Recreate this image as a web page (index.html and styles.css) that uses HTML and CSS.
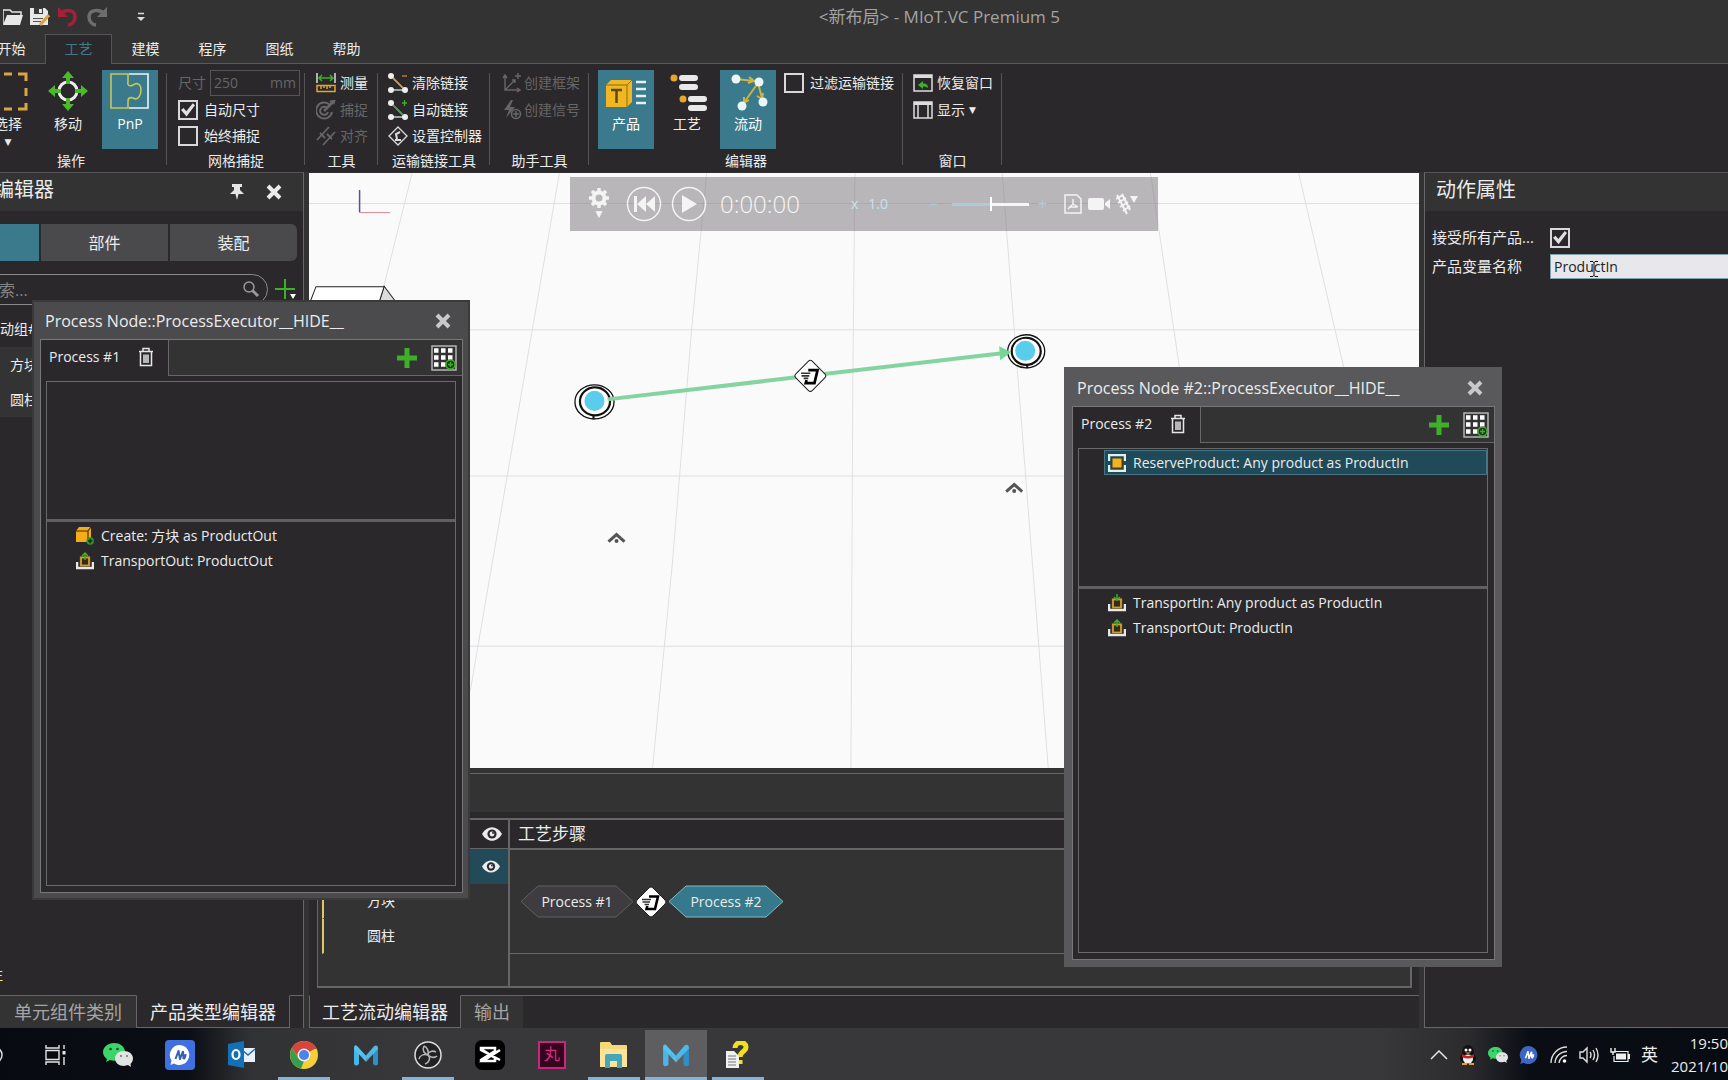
FILE: index.html
```html
<!DOCTYPE html>
<html lang="zh-CN">
<head>
    <meta charset="UTF-8">
    <meta name="viewport" content="width=device-width, initial-scale=1.0">
    <title>MIoT.VC Premium 5</title>
    <link rel="stylesheet" href="styles.css">
</head>
<body>
    <!-- shared icons -->
    <svg class="sprite" aria-hidden="true">
        <symbol id="close" viewBox="0 0 16 16"><path d="M2 2L14 14M14 2L2 14" stroke="currentColor" stroke-width="4"/></symbol>
        <symbol id="trash" viewBox="0 0 16 20"><path d="M1 4.500H15M5 4V1.500H11V4M2.500 5V18.500H13.500V5M6 7.500V16M8 7.500V16M10 7.500V16" fill="none" stroke="#e6e6e6" stroke-width="1.500"/></symbol>
        <symbol id="plus" viewBox="0 0 20 20"><path d="M10 0V20M0 10H20" stroke="#3fae2a" stroke-width="5"/></symbol>
        <symbol id="grid" viewBox="0 0 26 26">
            <rect x="1" y="1" width="24" height="24" fill="none" stroke="#b5b5b5" stroke-width="1.500"/>
            <path d="M3 5.500H7.500M10 5.500H14.500M17 5.500H21.500M3 12.500H7.500M10 12.500H14.500M17 12.500H21.500M3 19.500H7.500M10 19.500H14.500" stroke="#fff" stroke-width="4.500"/>
            <circle cx="19.500" cy="19.500" r="4.500" fill="#253222" stroke="#3fae2a" stroke-width="1.500"/>
            <path d="M19.500 17V22M17 19.500H22" stroke="#3fae2a" stroke-width="1.500"/>
        </symbol>
        <symbol id="transport" viewBox="0 0 18 18">
            <path d="M1 10V16H17V10" fill="none" stroke="#e8e8e8" stroke-width="2.500"/>
            <rect x="3.500" y="4" width="11" height="10.500" fill="#5a4210"/>
            <rect x="5" y="5.500" width="8" height="8" fill="#3a2a10" stroke="#c9a13c" stroke-width="1.800"/>
        </symbol>
        <symbol id="reserve" viewBox="0 0 18 18">
            <path d="M1 7V1H17V7M1 11V17H17V11" fill="none" stroke="#d9f1f7" stroke-width="2.400"/>
            <rect x="3" y="3" width="12" height="12" fill="#493c17"/>
            <rect x="4.500" y="4.500" width="9" height="9" fill="#f0b324"/>
        </symbol>
        <symbol id="cube-add" viewBox="0 0 18 18">
            <path d="M0 4L3 0H15V11L12 15H0Z" fill="#f6ac17"/>
            <path d="M0 4H12L15 0M12 4V15" fill="none" stroke="#453310" stroke-width="1.200"/>
            <circle cx="14.200" cy="14" r="3.800" fill="#2b9430"/>
            <path d="M14.200 11.800V16.200M12 14H16.400" stroke="#0d3311" stroke-width="1.400"/>
        </symbol>
        <symbol id="links" viewBox="0 0 20 20">
            <path d="M3 3L17 17H3" fill="none" stroke="#bcd0cf" stroke-width="1.300"/>
            <circle cx="3" cy="3" r="3" fill="#eee"/><circle cx="3" cy="17" r="3" fill="#eee"/><circle cx="17" cy="17" r="3" fill="#eee"/>
        </symbol>
        <symbol id="eye" viewBox="0 0 20 14">
            <path d="M0 7C5-2 15-2 20 7C15 16 5 16 0 7Z" fill="#ececec"/>
            <circle cx="10" cy="7" r="4.600" fill="#2a282b"/><circle cx="10" cy="7" r="2.400" fill="#ececec"/>
            <circle cx="11" cy="6" r="1" fill="#2a282b"/>
        </symbol>
        <symbol id="flow-mark" viewBox="0 0 32 32">
            <path d="M16 1Q17 1 18 2L30 14Q32 16 30 18L18 30Q16 32 14 30L2 18Q0 16 2 14L14 2Q15 1 16 1Z" fill="#fff" stroke="#222" stroke-width="1"/>
            <path d="M14 10.500H23L20 23H11.500L12.300 20" fill="none" stroke="#000" stroke-width="2.600"/>
            <path d="M7 13.500H16M7.500 16H15M9.500 18.500H14" stroke="#333" stroke-width="1.600"/>
        </symbol>
        <symbol id="wechat" viewBox="0 0 30 26">
            <path d="M11 1C5 1 0 5 0 10C0 13 1.500 15 4 17L3 20L7 18C10 19 13 19 16 17C20 15 22 13 22 9C21 4 17 1 11 1Z" fill="#3bd56a"/>
            <circle cx="7.500" cy="7" r="1.300" fill="#17512b"/><circle cx="14.500" cy="7" r="1.300" fill="#17512b"/>
            <path d="M21 9C16 9 12 12 12 16.500C12 21 16 24 21 24L25 23L28 25L27.500 22C29 20.500 30 18.500 30 16.500C30 12 26 9 21 9Z" fill="#e3e3e3"/>
            <circle cx="18" cy="14" r="1.100" fill="#777"/><circle cx="24" cy="14" r="1.100" fill="#777"/>
        </symbol>
        <symbol id="mark-m" viewBox="0 0 26 22">
            <path d="M1 20V4Q1 1 4 2L13 12V17L6 10V20Q3 23 1 20Z" fill="#47b7e8"/>
            <path d="M25 20V4Q25 1 22 2L12 12Q8 16 8 9L13 14Q15 16 20 9V20Q23 23 25 20Z" fill="#2f8fc9"/>
            <path d="M3 1L13 12L21 2Q25 0 25 5L13 18L1 5Q1 1 3 1Z" fill="#5cc9ef" opacity=".7"/>
        </symbol>
        <symbol id="chat-m" viewBox="0 0 22 22">
            <path d="M11 1A10 10 0 1 1 5 19.500L1.500 21L2.500 16.500A10 10 0 0 1 11 1Z" fill="currentColor"/>
        </symbol>
        <symbol id="chat-wave" viewBox="0 0 12 10">
            <path d="M1 9L4 1L5.500 9L8.500 1L9 9M9 9Q11 8 11 4" fill="none" stroke="currentColor" stroke-width="2"/>
        </symbol>
    </svg>

    <div class="app">
        <header class="titlebar">
            <div class="quick-bar">
                <div class="quick-icons">
                    <svg width="20" height="20" viewBox="0 0 20 20"><path d="M0 17V3H7L9 5H18V8" fill="none" stroke="#e8e8e8" stroke-width="1.500"/><path d="M0 18L4 8H20L17 18Z" fill="#e8e8e8"/></svg>
                    <svg width="20" height="20" viewBox="0 0 20 20"><path d="M0 1H15L18 4V18H0Z" fill="#e8e8e8"/><path d="M4 1H13V7H4ZM2 10H15V17H2Z" fill="#3a3a3a"/><path d="M9 2H12V6H9Z" fill="#e8e8e8"/><path d="M2 10H15V17H2Z" fill="#e8e8e8"/><path d="M3 11.500H13M3 14.500H11" stroke="#555"/><path d="M10 18L19 8" stroke="#d9a441" stroke-width="3"/></svg>
                    <svg width="22" height="20" viewBox="0 0 22 20"><path d="M3 7C8 2 18 2 18 10C18 15 14 18 11 18" fill="none" stroke="#a6203a" stroke-width="3.500"/><path d="M1 0V10H11Z" fill="#a6203a"/></svg>
                    <svg width="22" height="20" viewBox="0 0 22 20"><path d="M19 7C14 2 3 2 3 10C3 15 7 18 10 18" fill="none" stroke="#6e6e6e" stroke-width="3.500"/><path d="M21 0V10H11Z" fill="#6e6e6e"/></svg>
                    <svg class="quick-more" width="8" height="10" viewBox="0 0 8 10"><path d="M1 1.500H7" stroke="#ddd" stroke-width="1.500"/><path d="M0 5H8L4 9Z" fill="#ddd"/></svg>
                </div>
                <div class="app-title">&lt;新布局&gt; - MIoT.VC Premium 5</div>
            </div>
            <nav class="tabs">
                <button class="tab">开始</button>
                <button class="tab active">工艺</button>
                <button class="tab">建模</button>
                <button class="tab">程序</button>
                <button class="tab">图纸</button>
                <button class="tab">帮助</button>
            </nav>
        </header>

        <div class="ribbon">
            <section class="group group-edit">
                <div class="group-body">
                    <button class="big-btn">
                        <svg width="40" height="40" viewBox="0 0 40 40"><path d="M3 10V3H10M16 3H24M30 3H38V10M38 17V25M38 32V38H30M24 38H16M10 38H3V31M3 25V17" fill="none" stroke="#d9a441" stroke-width="3"/></svg>
                        <span>选择</span>
                        <span class="caret">▼</span>
                    </button>
                    <button class="big-btn">
                        <svg width="40" height="40" viewBox="0 0 40 40"><circle cx="20" cy="20" r="9" fill="none" stroke="#eee" stroke-width="3"/><path d="M20 0L26 7H22V13H18V7H14ZM20 40L26 33H22V27H18V33H14ZM0 20L7 14V18H13V22H7V26ZM40 20L33 14V18H27V22H33V26Z" fill="#4cb82c"/></svg>
                        <span>移动</span>
                    </button>
                    <button class="big-btn on">
                        <svg width="40" height="40" viewBox="0 0 40 40"><path d="M19 3H38V37H19" fill="none" stroke="#eaf6f9" stroke-width="1.600"/><path d="M18 3H1V37H18V30C18 25 23 27 23 27C28 30 31 24 31 19C31 13 27 11 23 14C19 16 17 14 18 10Z" fill="none" stroke="#c9c65c" stroke-width="1.600"/></svg>
                        <span>PnP</span>
                    </button>
                </div>
                <div class="group-name">操作</div>
            </section>
            <section class="group group-snap">
                <div class="group-body rows">
                    <div class="row dim"><label for="gridSize">尺寸</label><span class="size-box"><input type="text" id="gridSize" value="250" disabled><span>mm</span></span></div>
                    <label class="row"><input type="checkbox" class="check" checked>自动尺寸</label>
                    <label class="row"><input type="checkbox" class="check">始终捕捉</label>
                </div>
                <div class="group-name">网格捕捉</div>
            </section>
            <section class="group group-tools">
                <div class="group-body rows">
                    <button class="row"><svg width="20" height="20" viewBox="0 0 20 20"><path d="M1 0V10M19 0V10" stroke="#ddd" stroke-width="1.500"/><path d="M3 5H17M6 2L3 5L6 8M14 2L17 5L14 8" fill="none" stroke="#3fae2a" stroke-width="1.500"/><path d="M1 12.500H19V18.500H1ZM5 13V16M8 13V15M11 13V16M14 13V15" fill="none" stroke="#e0a82e" stroke-width="1.500"/></svg>测量</button>
                    <button class="row dim"><svg width="20" height="20" viewBox="0 0 20 20"><path d="M14 5A8 8 0 1 0 16 12M11 8A4 4 0 1 0 12 12" fill="none" stroke="#666" stroke-width="2"/><path d="M8 11L18 1M17 4L18 1L14 2" stroke="#666" stroke-width="2.500"/></svg>捕捉</button>
                    <button class="row dim"><svg width="20" height="20" viewBox="0 0 20 20"><path d="M1 14L13 1M7 19L19 6M4 7L9 12M11 8L16 13" stroke="#666" stroke-width="1.800"/></svg>对齐</button>
                </div>
                <div class="group-name">工具</div>
            </section>
            <section class="group group-links">
                <div class="group-body rows">
                    <button class="row"><svg width="20" height="20" viewBox="0 0 20 20"><use href="#links"/><path d="M5 5L15 15" stroke="#d99a4a" stroke-width="1.500"/><path d="M14 3H19" stroke="#c0703a" stroke-width="1.500"/></svg>清除链接</button>
                    <button class="row"><svg width="20" height="20" viewBox="0 0 20 20"><use href="#links"/><path d="M5 5L15 15" stroke="#4f9a5a" stroke-width="1.500"/><path d="M14 3H19M16.500 0V6" stroke="#3fae2a" stroke-width="1.300"/></svg>自动链接</button>
                    <button class="row"><svg width="20" height="20" viewBox="0 0 20 20"><path d="M10 1L19 10L10 19L1 10Z" fill="none" stroke="#ddd" stroke-width="1.300"/><path d="M12 6L8 8L9 13M7 14H13" fill="none" stroke="#ddd" stroke-width="2"/></svg>设置控制器</button>
                </div>
                <div class="group-name">运输链接工具</div>
            </section>
            <section class="group group-helpers">
                <div class="group-body rows">
                    <button class="row dim"><svg width="20" height="20" viewBox="0 0 20 20"><path d="M3 3V17H17M3 17L13 7M1 5L3 2L5 5M15 15L18 17L15 19M10 7H13V10M16 0V6M13 3H19" fill="none" stroke="#666" stroke-width="1.400"/></svg>创建框架</button>
                    <button class="row dim"><svg width="20" height="20" viewBox="0 0 20 20"><path d="M9 0L2 10H7L4 18L13 7H8L11 0Z" fill="#666"/><circle cx="14" cy="14" r="4.500" fill="#2a282b" stroke="#666" stroke-width="1.600"/><path d="M14 11V17M11 14H17" stroke="#666" stroke-width="1.500"/></svg>创建信号</button>
                </div>
                <div class="group-name">助手工具</div>
            </section>
            <section class="group group-editors">
                <div class="group-body">
                    <button class="big-btn on">
                        <svg width="40" height="40" viewBox="0 0 40 40"><path d="M0 14L5 9H26V31L21 36H0Z" fill="#f0b722"/><path d="M0 14H21L26 9M21 14V36" fill="none" stroke="#8a6a1c" stroke-width="1"/><path d="M5 19H16M10.500 19V32" stroke="#5d4a14" stroke-width="2.500"/><path d="M30 11H40M30 18H40M30 25H40M30 32H40" stroke="#e4f3f7" stroke-width="2.500"/></svg>
                        <span>产品</span>
                    </button>
                    <button class="big-btn">
                        <svg width="40" height="40" viewBox="0 0 40 40"><circle cx="7" cy="7" r="3.500" fill="#e6a62b"/><circle cx="16" cy="28" r="3.500" fill="#e6a62b"/><path d="M15 7H28M15 16H28M24 28H37M24 37H37" stroke="#e9e9e9" stroke-width="6" stroke-linecap="round"/></svg>
                        <span>工艺</span>
                    </button>
                    <button class="big-btn on">
                        <svg width="40" height="40" viewBox="0 0 40 40"><path d="M8 8L26 10M30 12L15 33M30 12L34 27M21 6L26 10L20 12M16 26L16 32L21 29M29 25L34 28L35 22" fill="none" stroke="#d0b23e" stroke-width="2"/><circle cx="8" cy="8" r="4.500" fill="#eaf6f9"/><circle cx="31" cy="11" r="4.500" fill="#eaf6f9"/><circle cx="14" cy="35" r="4.500" fill="#eaf6f9"/><circle cx="35" cy="31" r="4.500" fill="#eaf6f9"/></svg>
                        <span>流动</span>
                    </button>
                    <label class="row"><input type="checkbox" class="check">过滤运输链接</label>
                </div>
                <div class="group-name">编辑器</div>
            </section>
            <section class="group group-windows">
                <div class="group-body rows">
                    <button class="row"><svg width="20" height="20" viewBox="0 0 20 20"><path d="M1 2H19V18H1Z" fill="none" stroke="#ddd" stroke-width="1.500"/><path d="M1 3.500H19" stroke="#ddd" stroke-width="3"/><path d="M5 12L10 8V10.500Q15 10 15 15Q13 13 10 13.500V16Z" fill="#3fae2a"/></svg>恢复窗口</button>
                    <button class="row"><svg width="20" height="20" viewBox="0 0 20 20"><path d="M1 2H19V18H1ZM5 5V18M15 5V18" fill="none" stroke="#ddd" stroke-width="1.500"/><path d="M1 3.500H19" stroke="#ddd" stroke-width="3"/></svg>显示<span class="caret">▼</span></button>
                </div>
                <div class="group-name">窗口</div>
            </section>
        </div>

        <main class="workspace">
            <aside class="panel products">
                <div class="panel-head">
                    <h2 class="head-cut">编辑器</h2>
                    <button class="icon-btn" aria-label="pin"><svg width="14" height="16" viewBox="0 0 14 16"><path d="M2 0H12V3H10V6L14 10H8.500L7 16L5.500 10H0L4 6V3H2Z" fill="#e6e6e6"/></svg></button>
                    <button class="icon-btn" aria-label="close"><svg width="16" height="16"><use href="#close"/></svg></button>
                </div>
                <div class="segments">
                    <button class="segment on" aria-label="产品"></button>
                    <button class="segment">部件</button>
                    <button class="segment">装配</button>
                </div>
                <div class="search-row">
                    <div class="search-box">
                        <input type="text" placeholder="索..." aria-label="搜索">
                        <svg width="17" height="17" viewBox="0 0 17 17"><circle cx="6" cy="6" r="5" fill="none" stroke="#999" stroke-width="1.500"/><path d="M9.500 9.500L15 15" stroke="#999" stroke-width="3"/></svg>
                    </div>
                    <svg width="21" height="21" viewBox="0 0 21 21"><path d="M10 0V20M0 10H20" stroke="#3fae2a" stroke-width="2"/><path d="M15 15H21L18 20Z" fill="#fff"/></svg>
                </div>
                <div class="product-list">
                    <div class="flow-group">动组#1</div>
                    <div class="product-row">方块</div>
                    <div class="product-row">圆柱</div>
                </div>
                <div class="note">注</div>
                <div class="dock-tabs">
                    <button class="dock-tab">单元组件类别</button>
                    <button class="dock-tab active">产品类型编辑器</button>
                    <span class="dock-fill"></span>
                </div>
            </aside>

            <div class="center">
                <div class="viewport">
                    <svg class="scene" viewBox="309 173 1109 594" preserveAspectRatio="xMinYMin slice">
                        <g stroke="#e0e0e3" stroke-width="1" fill="none">
                            <path d="M309 203.500H1418M309 329.500H1418M309 475.500H1418M309 645.500H1418"/>
                            <path d="M412 173L384 285M559 173L537 300L470 690M706 173L691 329L672 560L652 767M854 173L852 370L850 767M1001 173L1013 329L1031 560L1047 767M1149 173L1178 367M1297 173L1342 367"/>
                        </g>
                        <path d="M359.500 190V212" stroke="#5b4f9a" stroke-width="1.500"/>
                        <path d="M359 212.500H390" stroke="#d98a98" stroke-width="1"/>
                        <path d="M384 286L396 302H379Z" fill="#ddd" stroke="#222"/>
                        <path d="M310 302L316 286.500H384L379 302Z" fill="#fff" stroke="#222"/>
                        <g fill="#fff" stroke="#111">
                            <ellipse cx="594" cy="401.500" rx="19.500" ry="17" stroke-width="1.300"/>
                            <ellipse cx="594.500" cy="401" rx="15" ry="14" stroke-width="2.200"/>
                            <path d="M593 415V419" stroke-width="2"/>
                            <ellipse cx="1025" cy="351" rx="18.500" ry="16.500" stroke-width="1.300"/>
                            <ellipse cx="1025" cy="351" rx="14.500" ry="13.500" stroke-width="2.200"/>
                            <path d="M1026 364V368" stroke-width="2"/>
                        </g>
                        <circle cx="594" cy="400.500" r="12" fill="#fff"/>
                        <circle cx="594" cy="400.500" r="10" fill="#5bcdec"/>
                        <circle cx="1024" cy="350.500" r="12" fill="#fff"/>
                        <circle cx="1024" cy="350.500" r="10" fill="#5bcdec"/>
                        <path d="M607 399L1001 353" stroke="#86d3a2" stroke-width="4"/>
                        <path d="M998 346L1010 352L999 360Z" fill="#76d694"/>
                        <use href="#flow-mark" x="793" y="359" width="33" height="33"/>
                        <path d="M608 541L616 534L624 541M1005 491L1013 484L1021 491" fill="none" stroke="#555" stroke-width="3"/>
                        <circle cx="616" cy="540.500" r="2" fill="#555"/><circle cx="1013" cy="490.500" r="2" fill="#555"/>
                    </svg>
                    <div class="playbar">
                        <button class="icon-btn gear" aria-label="settings">
                            <svg width="20" height="20" viewBox="0 0 20 20"><circle cx="10" cy="10" r="5.500" fill="none" stroke="#f4f4f4" stroke-width="4"/><path d="M10 0V4M10 16V20M0 10H4M16 10H20M3 3L6 6M14 14L17 17M17 3L14 6M6 14L3 17" stroke="#f4f4f4" stroke-width="3.500"/></svg>
                            <span class="caret">▼</span>
                        </button>
                        <button class="icon-btn" aria-label="rewind"><svg width="36" height="36" viewBox="0 0 36 36"><circle cx="18" cy="18" r="16.500" fill="none" stroke="#f4f4f4" stroke-width="1.500"/><path d="M8 10H11V26H8ZM20 10V26L11 18ZM29 10V26L20 18Z" fill="#f4f4f4"/></svg></button>
                        <button class="icon-btn" aria-label="play"><svg width="36" height="36" viewBox="0 0 36 36"><circle cx="18" cy="18" r="16.500" fill="none" stroke="#f4f4f4" stroke-width="1.500"/><path d="M11 9L26 18L11 27Z" fill="#f4f4f4"/></svg></button>
                        <span class="clock">0:00:00</span>
                        <span class="speed"><span>x</span>1.0</span>
                        <span class="sign">−</span>
                        <input type="range" class="slider" min="0" max="100" value="50" aria-label="speed">
                        <span class="sign">+</span>
                        <div class="record">
                            <svg width="18" height="20" viewBox="0 0 18 20"><path d="M1 1H13L17 5V19H1Z" fill="none" stroke="#f4f4f4" stroke-width="1.500"/><path d="M9 5V10L4 15M9 10L14 13M5 13H13" fill="none" stroke="#f4f4f4" stroke-width="1.400"/></svg>
                            <svg width="22" height="14" viewBox="0 0 22 14"><rect x="0" y="1" width="16" height="12" rx="2" fill="#f4f4f4"/><path d="M17 6L22 2V12L17 8Z" fill="#f4f4f4"/></svg>
                            <svg width="22" height="22" viewBox="0 0 22 22"><path d="M1 2L11 21M6 1L14 17M0 6L7 2M2 10L10 5M4 14L12 9M7 18L14 13" stroke="#f4f4f4" stroke-width="2"/><path d="M14 3H22L18 10Z" fill="#f4f4f4"/></svg>
                        </div>
                    </div>
                </div>

                <section class="flow-editor">
                    <div class="flow-head"></div>
                    <div class="flow-table">
                        <div class="flow-left">
                            <div class="flow-row head"><span class="eye-cell"><svg width="20" height="14"><use href="#eye"/></svg></span></div>
                            <div class="flow-row selected"><span class="eye-cell"><svg width="18" height="13"><use href="#eye"/></svg></span></div>
                            <div class="flow-row item">方块</div>
                            <div class="flow-row item">圆柱</div>
                        </div>
                        <div class="flow-right">
                            <div class="steps-head">工艺步骤</div>
                            <div class="steps">
                                <button class="step"><svg width="114" height="33" viewBox="0 0 114 33"><path d="M1 16.500L18 1H96L113 16.500L96 32H18Z" fill="#3e3c3f" stroke="#5f5f61"/></svg><span>Process #1</span></button>
                                <svg width="32" height="32"><use href="#flow-mark"/></svg>
                                <button class="step"><svg width="116" height="33" viewBox="0 0 116 33"><path d="M1 16.500L18 1H98L115 16.500L98 32H18Z" fill="#36798d" stroke="#85b9c6"/></svg><span>Process #2</span></button>
                            </div>
                        </div>
                    </div>
                    <div class="dock-tabs">
                        <button class="dock-tab active">工艺流动编辑器</button>
                        <button class="dock-tab">输出</button>
                        <span class="dock-fill"></span>
                    </div>
                </section>
            </div>

            <aside class="panel properties">
                <div class="panel-head"><h2>动作属性</h2></div>
                <div class="prop-row"><label for="acceptAll">接受所有产品...</label><input type="checkbox" id="acceptAll" class="check" checked></div>
                <div class="prop-row"><label for="varName">产品变量名称</label><input type="text" id="varName" class="prop-input" value="ProductIn"></div>
                <svg class="text-cursor" width="8" height="16" viewBox="0 0 8 16"><path d="M0 .500H3L4 1.500L5 .500H8M4 1V15M0 15.500H3L4 14.500L5 15.500H8" fill="none" stroke="#111"/></svg>
            </aside>
        </main>

        <footer class="taskbar">
            <div class="apps">
                <button class="task" aria-label="search"><svg width="20" height="20" viewBox="0 0 20 20"><circle cx="10" cy="10" r="8" fill="none" stroke="#ddd" stroke-width="1.500"/></svg></button>
                <button class="task" aria-label="task view"><svg width="22" height="20" viewBox="0 0 22 20"><path d="M1 0V3H14V0M1 20V17H14V20M1 5.500H14V14.500H1ZM19 0V4M19 12V20" fill="none" stroke="#e6e6e6" stroke-width="1.400"/><path d="M17.500 6H20.500V9.500H17.500Z" fill="#e6e6e6"/></svg></button>
                <button class="task" aria-label="WeChat"><svg width="30" height="26"><use href="#wechat"/></svg></button>
                <button class="task" aria-label="MioT chat"><svg width="30" height="30" viewBox="0 0 30 30"><rect width="30" height="30" rx="4" fill="#3f6fe0"/><use href="#chat-m" x="4" y="4" width="22" height="22" color="#fff"/><use href="#chat-wave" x="9" y="10" width="13" height="10" color="#3560b8"/></svg></button>
                <button class="task" aria-label="Outlook"><svg width="28" height="28" viewBox="0 0 28 28"><rect x="14" y="7" width="13" height="14" fill="#e8f1fa"/><path d="M14 9L20 14L27 8" fill="none" stroke="#1b6fb5" stroke-width="1.500"/><path d="M0 3L16 0V27L0 24Z" fill="#1371b8"/><ellipse cx="8" cy="13.500" rx="3.500" ry="4.500" fill="none" stroke="#fff" stroke-width="2.200"/></svg></button>
                <button class="task open" aria-label="Chrome"><svg width="28" height="28" viewBox="0 0 28 28"><circle cx="14" cy="14" r="14" fill="#f3cf3a"/><path d="M14 14L2 7A14 14 0 0 1 26 7Z" fill="#d8443a"/><path d="M14 8H26.500A14 14 0 0 0 2 7L8 16Z" fill="#d8443a"/><path d="M2 7L9 18L14 20L11 27.700A14 14 0 0 1 2 7Z" fill="#3b9c4e"/><circle cx="14" cy="14" r="6.500" fill="#f0f0f0"/><circle cx="14" cy="14" r="5" fill="#4a84ea"/></svg></button>
                <button class="task" aria-label="MIoT"><svg width="28" height="22"><use href="#mark-m"/></svg></button>
                <button class="task open" aria-label="OBS"><svg width="28" height="28" viewBox="0 0 28 28"><circle cx="14" cy="14" r="13" fill="#222124" stroke="#ddd" stroke-width="1.500"/><path d="M10 5C8 9 10 13 14 14M22 11C18 9 14 11 14 14M11 23C15 22 17 17 14 14M14 14C10 13 6 14 5 18M14 14C15 10 13 6 10 5M14 14C17 17 21 17 23 15" fill="none" stroke="#b5b5b5" stroke-width="1.600"/></svg></button>
                <button class="task" aria-label="CapCut"><svg width="30" height="30" viewBox="0 0 30 30"><rect width="30" height="30" rx="7" fill="#000"/><path d="M25 10L8 21H20V18L6 9M25 20L6 10V8H20V11L6 20V22" fill="none" stroke="#fff" stroke-width="2.500"/></svg></button>
                <button class="task" aria-label="maru"><span class="maru">丸</span></button>
                <button class="task open" aria-label="Explorer"><svg width="28" height="28" viewBox="0 0 28 28"><path d="M0 2Q0 1 1 1H10L12 4H26Q27 4 27 5V26H0Z" fill="#f7d879"/><path d="M0 8H27V26H0Z" fill="#fbe49a"/><path d="M5 27V15Q5 13 7 13H20Q22 13 22 15V27H17V20H10V27Z" fill="#45a6b8"/></svg></button>
                <button class="task open current" aria-label="MIoT.VC"><svg width="28" height="24"><use href="#mark-m"/></svg></button>
                <button class="task open" aria-label="Help"><svg width="26" height="28" viewBox="0 0 26 28"><path d="M10 7C10 0 21 0 21 6C21 11 15 10 15 16M15 19V23" fill="none" stroke="#f1e11d" stroke-width="5"/><path d="M1 10H9L14 15V27H1Z" fill="#f1f1f1"/><path d="M3 15H11M3 18H11M3 21H11M3 24H11" stroke="#777"/></svg></button>
            </div>
            <div class="tray">
                <svg width="18" height="10" viewBox="0 0 18 10"><path d="M1 9L9 1L17 9" fill="none" stroke="#e6e6e6" stroke-width="1.500"/></svg>
                <svg width="18" height="20" viewBox="0 0 18 20"><ellipse cx="9" cy="8" rx="6" ry="8" fill="#111"/><ellipse cx="9" cy="13" rx="8" ry="6" fill="#111"/><ellipse cx="9" cy="14" rx="5" ry="4.500" fill="#eee"/><path d="M3 9Q9 13 15 9V12Q9 15 3 12Z" fill="#c3202b"/><circle cx="7" cy="5" r="1.500" fill="#fff"/><circle cx="11" cy="5" r="1.500" fill="#fff"/><path d="M6 7.500H12L9 9ZM3 18H8V20H3ZM10 18H15V20H10Z" fill="#e79b2c"/></svg>
                <svg width="20" height="18"><use href="#wechat"/></svg>
                <svg width="20" height="20" viewBox="0 0 20 20"><use href="#chat-m" width="20" height="20" color="#3c66c4"/><use href="#chat-wave" x="5" y="6" width="11" height="8" color="#fff"/></svg>
                <svg width="18" height="18" viewBox="0 0 18 18"><path d="M1 17A16 16 0 0 1 17 1M5 17A12 12 0 0 1 17 5.500M9 17A8 8 0 0 1 17 9.500" fill="none" stroke="#ddd" stroke-width="1.400"/><circle cx="14.500" cy="15" r="1.800" fill="#fff"/></svg>
                <svg width="20" height="18" viewBox="0 0 20 18"><path d="M1 6H4L8 2V16L4 12H1ZM11 6Q13 9 11 12M14 4Q17 9 14 14M17 2Q21 9 17 16" fill="none" stroke="#ddd" stroke-width="1.400"/></svg>
                <svg width="20" height="16" viewBox="0 0 20 16"><path d="M5 4.500H18V14.500H4V9" fill="none" stroke="#eee" stroke-width="1.200"/><path d="M6 6.500H16V12.500H6ZM18 7H20V12H18Z" fill="#eee"/><path d="M1 1V5H5V1M3 5V8" fill="none" stroke="#eee" stroke-width="1.400"/></svg>
                <span class="ime">英</span>
                <div class="date"><span>19:50</span><span>2021/10</span></div>
            </div>
        </footer>
    </div>

    <!-- floating process editors -->
    <section class="window window-one">
        <div class="window-head"><h3>Process Node::ProcessExecutor__HIDE__</h3><button class="icon-btn" aria-label="close"><svg width="16" height="16"><use href="#close"/></svg></button></div>
        <div class="window-body">
            <div class="window-tabs">
                <div class="window-tab"><span>Process #1</span><svg width="16" height="20"><use href="#trash"/></svg></div>
                <div class="window-tools"><button class="icon-btn" aria-label="add"><svg width="20" height="20"><use href="#plus"/></svg></button><button class="icon-btn" aria-label="library"><svg width="26" height="26"><use href="#grid"/></svg></button></div>
            </div>
            <div class="lists">
                <ul class="list top"></ul>
                <ul class="list">
                    <li><svg width="18" height="18"><use href="#cube-add"/></svg>Create: 方块 as ProductOut</li>
                    <li><svg width="18" height="18" viewBox="0 0 18 18"><use href="#transport"/><path d="M9 8V1M6 4L9 1L12 4" fill="none" stroke="#3fae2a" stroke-width="1.500"/></svg>TransportOut: ProductOut</li>
                </ul>
            </div>
        </div>
    </section>

    <section class="window window-two">
        <div class="window-head"><h3>Process Node #2::ProcessExecutor__HIDE__</h3><button class="icon-btn" aria-label="close"><svg width="16" height="16"><use href="#close"/></svg></button></div>
        <div class="window-body">
            <div class="window-tabs">
                <div class="window-tab"><span>Process #2</span><svg width="16" height="20"><use href="#trash"/></svg></div>
                <div class="window-tools"><button class="icon-btn" aria-label="add"><svg width="20" height="20"><use href="#plus"/></svg></button><button class="icon-btn" aria-label="library"><svg width="26" height="26"><use href="#grid"/></svg></button></div>
            </div>
            <div class="lists">
                <ul class="list top">
                    <li class="selected"><svg width="18" height="18"><use href="#reserve"/></svg>ReserveProduct: Any product as ProductIn</li>
                </ul>
                <ul class="list">
                    <li><svg width="18" height="18" viewBox="0 0 18 18"><use href="#transport"/><path d="M9 0V6M6 3L9 6L12 3" fill="none" stroke="#3fae2a" stroke-width="1.500"/></svg>TransportIn: Any product as ProductIn</li>
                    <li><svg width="18" height="18" viewBox="0 0 18 18"><use href="#transport"/><path d="M9 8V1M6 4L9 1L12 4" fill="none" stroke="#3fae2a" stroke-width="1.500"/></svg>TransportOut: ProductIn</li>
                </ul>
            </div>
        </div>
    </section>
</body>
</html>
```

FILE: styles.css
```css
* {
    box-sizing: border-box;
}

body {
    margin: 0;
    height: 100vh;
    overflow: hidden;
    position: relative;
    background: #333;
    color: #ececec;
    font-family: "Open Sans", "Noto Sans CJK SC", sans-serif;
    font-size: 14px;
    line-height: 20px;
}

button, input {
    font: inherit;
    color: inherit;
    background: none;
    border: none;
    padding: 0;
    margin: 0;
}

button {
    cursor: pointer;
    white-space: nowrap;
}

svg {
    flex: none;
    display: block;
}

h2, h3, ul {
    margin: 0;
    padding: 0;
    font-weight: normal;
    list-style: none;
}

.sprite {
    position: absolute;
    width: 0;
    height: 0;
}

.app {
    height: 100vh;
    display: flex;
    flex-direction: column;
}

.icon-btn {
    display: flex;
    flex-direction: column;
    align-items: center;
}

.caret {
    font-family: "DejaVu Sans", sans-serif;
    font-size: 9px;
    line-height: 12px;
}

.check {
    appearance: none;
    flex: none;
    width: 20px;
    height: 20px;
    border: 2px solid #d8d8d8;
    display: grid;
    place-items: center;
}

.check:checked::after {
    content: "";
    width: 14px;
    height: 14px;
    background: #e0e0e0;
    clip-path: polygon(0 52%, 18% 38%, 38% 60%, 84% 4%, 100% 18%, 40% 98%);
}

/* title bar */
.titlebar {
    flex: none;
    background: #333;
}

.quick-bar {
    height: 34px;
    display: flex;
    align-items: center;
}

.quick-icons {
    flex: 1;
    display: flex;
    align-items: center;
    gap: 7px;
    padding-left: 3px;
}

.quick-more {
    margin-left: 22px;
}

.app-title {
    color: #a3a3a3;
    font-size: 17px;
    margin-right: 668px;
}

.tabs {
    display: flex;
    height: 30px;
    margin-left: -22px;
    border-bottom: 1px solid #5a5a5a;
}

.tab {
    width: 67px;
    height: 30px;
    padding-bottom: 2px;
    border: 1px solid transparent;
    border-bottom: none;
}

.tab.active {
    color: #427887;
    background: #2a282b;
    border-color: #555;
}

/* ribbon */
.ribbon {
    flex: none;
    height: 108px;
    padding-top: 6px;
    display: flex;
    background: #2a282b;
}

.group {
    display: flex;
    flex-direction: column;
    position: relative;
}

.group::after {
    content: "";
    position: absolute;
    right: 0;
    top: 3px;
    height: 92px;
    width: 1px;
    background: #555;
}

.group-body {
    height: 80px;
    display: flex;
}

.group-body.rows {
    flex-direction: column;
}

.group-name {
    text-align: center;
    line-height: 21px;
}

.row {
    height: 27px;
    padding-bottom: 1px;
    display: flex;
    align-items: center;
    gap: 4px;
}

.dim {
    color: #666;
}

.big-btn {
    width: 56px;
    height: 79px;
    display: flex;
    flex-direction: column;
    align-items: center;
    line-height: 25px;
    padding-top: 1px;
}

.big-btn.on {
    background: #3a7a8c;
    color: #fff;
}

.group-edit {
    width: 167px;
}

.group-edit .group-body {
    margin-left: -20px;
    gap: 4px;
}

.group-edit .big-btn.on {
    margin-left: 2px;
}

.group-edit .group-name {
    padding-right: 25px;
}

.group-snap {
    width: 138px;
}

.group-snap .group-body {
    padding-left: 11px;
}

.group-snap .row {
    gap: 6px;
}

.group-snap .row.dim {
    gap: 4px;
}

.size-box {
    width: 90px;
    height: 26px;
    border: 1px solid #555;
    display: flex;
    align-items: center;
    padding: 0 3px;
}

.size-box input {
    width: 56px;
    color: #666;
}

.group-tools {
    width: 73px;
}

.group-tools .group-body {
    padding-left: 11px;
}

.group-links {
    width: 112px;
}

.group-links .group-body {
    padding-left: 10px;
}

.group-helpers {
    width: 99px;
}

.group-helpers .group-body {
    padding-left: 12px;
}

.group-helpers .row {
    gap: 2px;
}

.group-editors {
    width: 314px;
}

.group-editors .group-body {
    padding-left: 9px;
    gap: 5px;
}

.group-editors .row {
    margin-left: 3px;
    gap: 6px;
}

.group-windows {
    width: 99px;
}

.group-windows .group-body {
    padding-left: 10px;
}

/* docked panels */
.workspace {
    flex: 1;
    min-height: 0;
    display: flex;
    gap: 5px;
}

.panel {
    flex: none;
    width: 304px;
    background: #2a282b;
    border-top: 1px solid #555;
    display: flex;
    flex-direction: column;
    overflow: hidden;
}

.panel-head {
    flex: none;
    height: 38px;
    background: #333;
    display: flex;
    align-items: center;
    gap: 22px;
    padding-right: 21px;
}

.panel-head h2 {
    flex: 1;
    font-size: 20px;
    line-height: 34px;
    padding-bottom: 4px;
}

.panel-head .head-cut {
    margin-left: -6px;
}

.products {
    border-right: 1px solid #666;
}

.segments {
    display: flex;
    gap: 2px;
    margin-top: 13px;
    padding-right: 6px;
}

.segment {
    flex: 1;
    height: 37px;
    font-size: 16px;
    background: #4a4a4c;
}

.segment.on {
    flex: none;
    width: 39px;
    background: #3a7a8c;
}

.segment:last-child {
    border-radius: 0 6px 6px 0;
}

.search-row {
    display: flex;
    align-items: center;
    gap: 7px;
    margin-top: 13px;
}

.search-box {
    width: 288px;
    height: 31px;
    margin-left: -20px;
    border: 1px solid #8a8a8a;
    border-radius: 16px;
    display: flex;
    align-items: center;
    padding: 0 7px 0 18px;
}

.search-box input {
    flex: 1;
    min-width: 0;
    font-size: 16px;
    outline: none;
}

.search-box input::placeholder {
    color: #858585;
}

.flow-group {
    height: 42px;
    line-height: 48px;
}

.product-row {
    height: 35px;
    line-height: 35px;
    padding-left: 10px;
    background: #333;
}

.note {
    margin: auto 0 10px -11px;
    color: #f0e9b0;
}

.dock-tabs {
    flex: none;
    display: flex;
    height: 33px;
    background: #2a282b;
}

.dock-tab {
    height: 33px;
    padding: 0 13px;
    font-size: 18px;
    line-height: 30px;
    color: #a5a5a5;
    background: #333;
    border-top: 1px solid #666;
}

.dock-tab.active {
    padding: 0 12px;
    color: #ececec;
    background: #2a282b;
    border: 1px solid #666;
    border-top-color: transparent;
}

.products .dock-tab {
    padding: 0 14px;
}

.products .dock-tab.active {
    padding: 0 13px;
}

.dock-fill {
    flex: 1;
    border-top: 1px solid #666;
}

/* centre */
.center {
    flex: 1;
    min-width: 0;
    display: flex;
    flex-direction: column;
}

.viewport {
    flex: 1;
    min-height: 0;
    margin-top: 1px;
    position: relative;
    background: #fafafa;
    overflow: hidden;
}

.scene {
    width: 100%;
    height: 100%;
}

.playbar {
    position: absolute;
    top: 4px;
    left: 261px;
    width: 588px;
    height: 54px;
    background: rgba(124, 120, 125, 0.53);
    color: #f6f6f6;
    display: flex;
    align-items: center;
    gap: 9px;
    padding-left: 19px;
}

.gear {
    margin-right: 8px;
}

.clock {
    width: 122px;
    margin-left: 4px;
    font-size: 24px;
    font-weight: 300;
}

.speed {
    display: flex;
    gap: 10px;
    width: 69px;
    color: #c3e4ef;
}

.sign {
    width: 14px;
    color: #a9cfdc;
    font-size: 16px;
}

.slider {
    appearance: none;
    width: 77px;
    height: 14px;
    background: linear-gradient(to right, #a9ccd6 50%, #f6f6f6 50%) center / 100% 3px no-repeat;
}

.slider::-webkit-slider-thumb {
    appearance: none;
    width: 2px;
    height: 14px;
    background: #fff;
}

.record {
    display: flex;
    align-items: center;
    gap: 6px;
    margin-left: 3px;
}

.flow-editor {
    flex: none;
    height: 255px;
    margin-top: 5px;
    background: #2a282b;
    border-top: 1px solid #666;
    display: flex;
    flex-direction: column;
}

.flow-head {
    flex: none;
    height: 38px;
    background: #333;
}

.flow-table {
    flex: 1;
    margin: 6px 7px 7px 8px;
    display: flex;
    border: 2px solid #666;
    border-left-width: 1px;
    background: #333;
}

.flow-left {
    width: 192px;
    border-right: 2px solid #666;
}

.flow-row {
    height: 35px;
    line-height: 34px;
    display: flex;
    justify-content: flex-end;
}

.flow-row.head {
    height: 29px;
    background: #2a282b;
    border-bottom: 1px solid #666;
}

.flow-row.selected {
    background: #234a59;
}

.flow-row.item {
    justify-content: flex-start;
    margin-left: 4px;
    padding-left: 43px;
    border-left: 2px solid #e0c766;
    border-bottom: 1px solid #333;
}

.eye-cell {
    width: 26px;
    display: flex;
    align-items: center;
}

.flow-right {
    flex: 1;
}

.steps-head {
    height: 30px;
    padding-left: 8px;
    font-size: 17px;
    line-height: 28px;
    background: #2a282b;
    border-bottom: 2px solid #666;
}

.steps {
    height: 104px;
    padding-left: 10px;
    display: flex;
    align-items: center;
    gap: 1px;
    border-bottom: 1px solid #666;
}

.step {
    display: grid;
    place-items: center;
}

.step > * {
    grid-area: 1 / 1;
}

.properties {
    border-left: 1px solid #666;
    border-bottom: 1px solid #666;
}

.properties .panel-head {
    padding-left: 11px;
    margin-bottom: 12px;
}

.prop-row {
    height: 29px;
    padding-left: 7px;
    display: flex;
    align-items: center;
    font-size: 15px;
}

.prop-row label {
    width: 118px;
    padding-bottom: 2px;
}

.prop-input {
    flex: 1;
    min-width: 0;
    height: 25px;
    padding: 0 3px;
    font-size: 14px;
    color: #222;
    background: #e8e8ec;
    border: 1px solid #7fa3ad;
    border-right: none;
}

.text-cursor {
    position: absolute;
    left: 1590px;
    top: 261px;
}

/* taskbar */
.taskbar {
    flex: none;
    height: 52px;
    display: flex;
    justify-content: space-between;
    background: linear-gradient(to right, #070a10 0, #0b0e14 190px, #313234 250px, #38373a 420px, #38373a 1380px, #2b2b2e 1470px, #0a0d14 1530px, #070b12 100%);
}

.apps {
    display: flex;
    margin-left: -37px;
    padding-top: 2px;
}

.task {
    width: 62px;
    padding: 0 5px;
    display: flex;
    align-items: center;
    justify-content: center;
}

.task.open {
    background: linear-gradient(to top, #83b3da 3px, transparent 3px) content-box;
}

.task.open.current {
    padding: 0;
    background: linear-gradient(to top, #83b3da 3px, #5e5e60 3px);
}

.maru {
    width: 28px;
    height: 28px;
    border: 2px solid #c4297f;
    background: #35051f;
    color: #d2307f;
    font-size: 16px;
    line-height: 22px;
}

.tray {
    display: flex;
    align-items: center;
    gap: 11px;
    padding-top: 2px;
}

.ime {
    font-size: 17px;
}

.date {
    width: 59px;
    font-size: 15px;
    line-height: 23px;
    display: flex;
    flex-direction: column;
    align-items: flex-end;
}

/* floating windows */
.window {
    position: absolute;
    width: 438px;
    height: 600px;
    padding: 0 5px 5px 6px;
    display: flex;
    flex-direction: column;
    background: #4b4b4d;
    border: 2px solid #3a3a3b;
}

.window-one {
    left: 32px;
    top: 300px;
}

.window-two {
    left: 1064px;
    top: 367px;
    background: #59595b;
    border-color: #59595b;
}

.window-head {
    height: 37px;
    padding: 0 12px 0 5px;
    display: flex;
    align-items: center;
    justify-content: space-between;
    color: #c9c9c9;
}

.window-head h3 {
    color: #ececec;
    font-size: 16px;
}

.window-body {
    flex: 1;
    display: flex;
    flex-direction: column;
    background: #2a282b;
    border: 1px solid #777;
}

.window-tabs {
    height: 36px;
    display: flex;
}

.window-tab {
    width: 127px;
    padding: 0 14px 2px 8px;
    display: flex;
    align-items: center;
    justify-content: space-between;
}

.window-tools {
    flex: 1;
    display: flex;
    align-items: center;
    justify-content: flex-end;
    gap: 14px;
    padding-right: 5px;
    background: #333;
    border-left: 1px solid #666;
    border-bottom: 1px solid #666;
}

.lists {
    flex: 1;
    margin: 5px 6px 6px 5px;
    display: flex;
    flex-direction: column;
    border: 1px solid #6a6a6a;
}

.list {
    padding-top: 1px;
}

.list.top {
    height: 140px;
    border-bottom: 3px solid #606062;
}

.list li {
    height: 25px;
    margin-left: 25px;
    padding-left: 3px;
    display: flex;
    align-items: center;
    gap: 7px;
    border: 1px solid transparent;
}

.list li.selected {
    background: #214a59;
    border-color: #457584;
}
```
